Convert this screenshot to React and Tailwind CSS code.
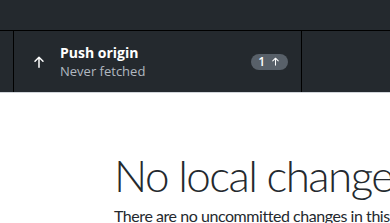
import React from "react";

function ArrowUp({ className }) {
  return (
    <svg viewBox="0 0 16 16" className={className} fill="currentColor">
      <path d="M3.47 7.78a.75.75 0 0 1 0-1.06l4-4a.75.75 0 0 1 1.06 0l4 4a.75.75 0 0 1-1.06 1.06L8.75 5.06v8.19a.75.75 0 0 1-1.5 0V5.06L4.53 7.78a.75.75 0 0 1-1.06 0Z" />
    </svg>
  );
}

export default function App() {
  return (
    <div className="w-[390px] h-[223px] overflow-hidden bg-white" style={{ fontFamily: '"Open Sans", "Noto Sans", sans-serif' }}>
      <div className="h-[31px] bg-[#24292e] border-b border-black" />
      <div className="h-[62px] flex bg-[#24292e] border-b border-[#d1d5da]">
        <div className="w-[14px] border-r border-black shrink-0" />
        <div className="w-[288px] border-r border-black shrink-0 flex items-center pl-[17px] pr-[13px]">
          <ArrowUp className="w-[16px] h-[16px] text-white shrink-0" />
          <div className="ml-[13px] flex flex-col flex-1 leading-none">
            <span className="text-white font-bold text-[14px] leading-[18px]">Push origin</span>
            <span className="text-[#b1b8c0] text-[13px] leading-[18px]">Never fetched</span>
          </div>
          <div className="flex items-center gap-[5px] bg-[#586069] rounded-full h-[16px] px-[7px] text-white text-[12px] font-semibold">
            <span className="leading-none">1</span>
            <ArrowUp className="w-[11px] h-[11px]" />
          </div>
        </div>
        <div className="flex-1" />
      </div>
      <div className="pl-[114px] pt-[56px] font-['Lato',sans-serif]">
        <div className="text-[44px] font-light text-[#24292e] leading-[52px] tracking-[-1.6px] whitespace-nowrap">No local changes</div>
        <div className="text-[16px] text-[#24292e] leading-[22px] tracking-[-0.45px] whitespace-nowrap mt-[4px]">There are no uncommitted changes in this repository.</div>
      </div>
    </div>
  );
}
